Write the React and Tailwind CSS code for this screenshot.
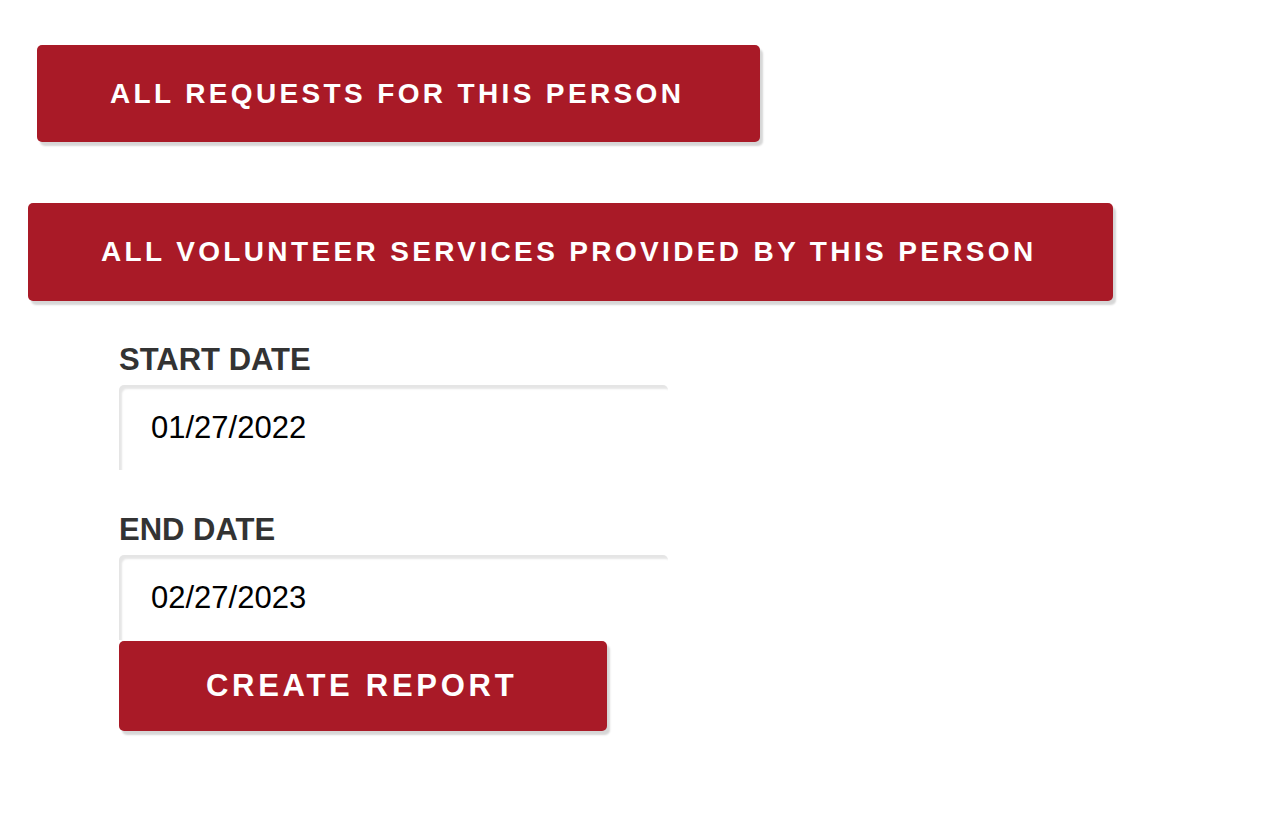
import React, { useState } from "react";

const redBtn =
  "block bg-[#a91a27] text-white font-bold uppercase rounded-[5px] shadow-[3px_4px_2px_rgba(0,0,0,0.16)] tracking-[0.12em] whitespace-nowrap";

function DateField({ label, value, onChange, className = "" }) {
  return (
    <div className={className}>
      <label className="block text-[31px] leading-[34px] font-bold text-[#333333]">{label}</label>
      <input
        type="text"
        value={value}
        onChange={(e) => onChange(e.target.value)}
        className="mt-2 block w-[549px] h-[85px] pl-8 text-[31px] text-black bg-white rounded-t-[5px] outline-none shadow-[inset_3px_4px_2px_rgba(0,0,0,0.1)]"
      />
    </div>
  );
}

export default function App() {
  const [startDate, setStartDate] = useState("01/27/2022");
  const [endDate, setEndDate] = useState("02/27/2023");

  return (
    <div className="min-h-screen bg-white pt-[45px] font-['Liberation_Sans',Arial,sans-serif]">
      <button className={`${redBtn} ml-[37px] h-[97px] pl-[73px] pr-[76px] text-[28px]`}>
        All requests for this person
      </button>

      <button className={`${redBtn} ml-[28px] mt-[61px] h-[98px] pl-[73px] pr-[76px] text-[28px]`}>
        All volunteer services provided by this person
      </button>

      <div className="ml-[119px] mt-[42px]">
        <DateField label="START DATE" value={startDate} onChange={setStartDate} />
        <DateField label="END DATE" value={endDate} onChange={setEndDate} className="mt-[43px]" />
        <button className={`${redBtn} mt-px h-[90px] pl-[87px] pr-[90px] text-[31px]`}>Create report</button>
      </div>
    </div>
  );
}
